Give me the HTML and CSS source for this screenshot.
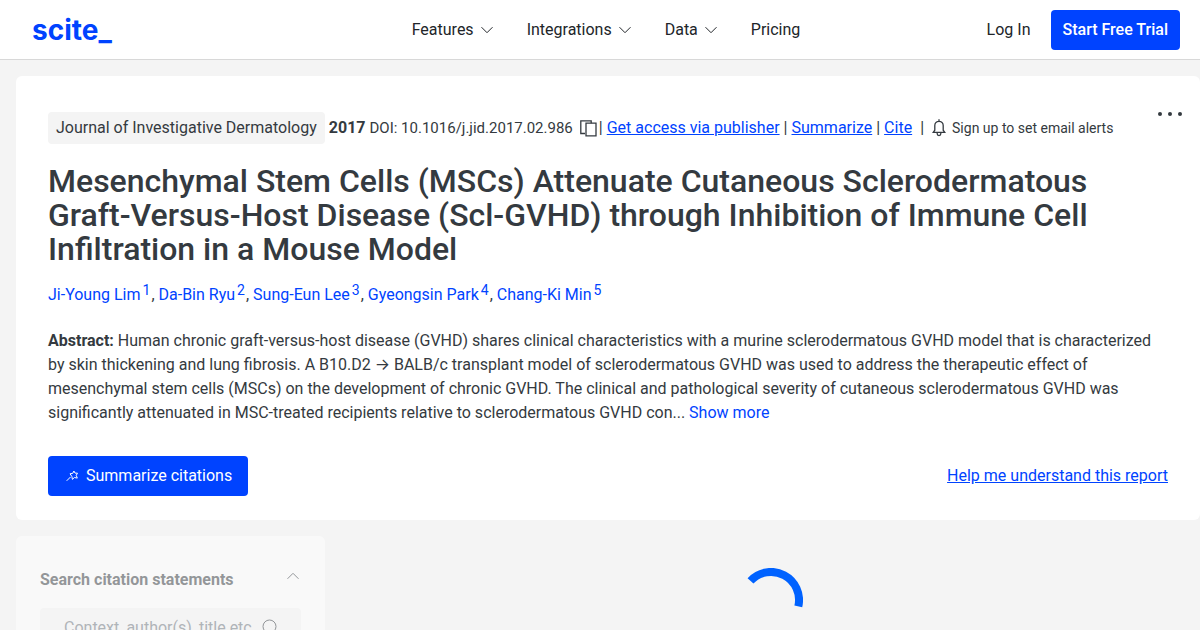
FILE: index.html
```html
<!DOCTYPE html>
<html lang="en">
<head>
<meta charset="utf-8">
<meta name="viewport" content="width=device-width, initial-scale=1">
<title>Mesenchymal Stem Cells (MSCs) Attenuate Cutaneous Sclerodermatous Graft-Versus-Host Disease - scite</title>
<link rel="stylesheet" href="styles.css">
</head>
<body>
<header class="header">
  <a class="logo" href="#">scite_</a>
  <nav class="nav">
    <button class="nav-item" type="button">Features
      <svg class="chevron" viewBox="0 0 12 8" aria-hidden="true"><path d="M.5 1.2 6 6.7l5.500-5.500"/></svg></button>
    <button class="nav-item" type="button">Integrations
      <svg class="chevron" viewBox="0 0 12 8" aria-hidden="true"><path d="M.5 1.2 6 6.7l5.500-5.500"/></svg></button>
    <button class="nav-item" type="button">Data
      <svg class="chevron" viewBox="0 0 12 8" aria-hidden="true"><path d="M.5 1.2 6 6.7l5.500-5.500"/></svg></button>
    <a class="nav-item" href="#">Pricing</a>
  </nav>
  <div class="account">
    <a class="login" href="#">Log In</a>
    <a class="trial" href="#">Start Free Trial</a>
  </div>
</header>

<main class="page">
  <article class="card">
    <div class="topline">
      <div class="meta">
        <span class="journal">Journal of Investigative Dermatology</span>
        <b>2017</b>
        <span class="doi">DOI: 10.1016/j.jid.2017.02.986</span>
        <span class="copy-group">
          <button class="icon-button" type="button" aria-label="Copy DOI">
            <svg class="copy" viewBox="0 0 17 17" aria-hidden="true"><path d="M5 13.500H.8V.8h10.400v2.400"/><path d="M6 3.200h10v12.600H6z"/></svg>
          </button>|
        </span>
        <a href="#">Get access via publisher</a>
        <span>|</span>
        <a href="#">Summarize</a>
        <span>|</span>
        <a href="#">Cite</a>
        <span class="divider">|</span>
        <button class="alerts" type="button">
          <svg class="bell" viewBox="0 0 14 18" aria-hidden="true"><path d="M7 .3v2M1.200 13.400h11.600l-1.600-2.200V6.500a4.200 4.200 0 0 0-8.400 0v4.700zM5.200 14v.8a1.800 1.800 0 0 0 3.600 0V14"/></svg>
          Sign up to set email alerts
        </button>
      </div>
      <button class="more" type="button" aria-label="More options">
        <svg class="dots" viewBox="0 0 24 4" aria-hidden="true"><circle cx="2" cy="2" r="2"/><circle cx="12" cy="2" r="2"/><circle cx="22" cy="2" r="2"/></svg>
      </button>
    </div>

    <h1 class="title">Mesenchymal Stem Cells (MSCs) Attenuate Cutaneous Sclerodermatous Graft-Versus-Host Disease (Scl-GVHD) through Inhibition of Immune Cell Infiltration in a Mouse Model</h1>

    <p class="authors"><a href="#">Ji-Young Lim<sup>1</sup></a>, <a href="#">Da-Bin Ryu<sup>2</sup></a>, <a href="#">Sung-Eun Lee<sup>3</sup></a>, <a href="#">Gyeongsin Park<sup>4</sup></a>, <a href="#">Chang-Ki Min<sup>5</sup></a></p>

    <p class="abstract"><b>Abstract:</b> Human chronic graft-versus-host disease (GVHD) shares clinical characteristics with a murine sclerodermatous GVHD model that is characterized by skin thickening and lung fibrosis. A B10.D2 → BALB/c transplant model of sclerodermatous GVHD was used to address the therapeutic effect of mesenchymal stem cells (MSCs) on the development of chronic GVHD. The clinical and pathological severity of cutaneous sclerodermatous GVHD was significantly attenuated in MSC-treated recipients relative to sclerodermatous GVHD con... <a href="#">Show more</a></p>

    <div class="actions">
      <button class="summarize" type="button">
        <svg class="wand" viewBox="0 0 12 12" aria-hidden="true"><path d="M.7 10.800 4.600 6.900M4 3.800l2.700-.4L7.900 1l1.100 2.100 2.500.1-1.300 2.200 1.100 2.700-2.900-.6-2 1.900-.5-2.900z"/></svg>
        Summarize citations
      </button>
      <a class="help" href="#">Help me understand this report</a>
    </div>
  </article>

  <div class="columns">
    <aside class="filters">
      <div class="filters-head">
        <label class="filters-title" for="search">Search citation statements</label>
        <button class="icon-button" type="button" aria-label="Collapse search">
          <svg class="chevron up" viewBox="0 0 12 8" aria-hidden="true"><path d="M.5 1.200 6 6.700l5.500-5.500"/></svg>
        </button>
      </div>
      <div class="search">
        <input class="search-input" id="search" type="text" placeholder="Context, author(s), title etc.">
        <svg class="glass" viewBox="0 0 18 18" aria-hidden="true"><circle cx="8.500" cy="7.500" r="6.500"/><path d="m4 12-3.500 4.500"/></svg>
      </div>
    </aside>
    <section class="results" aria-label="Loading citations">
      <svg class="spinner" viewBox="0 0 64 64" aria-hidden="true"><path d="M11.500 12.900A28 28 0 0 1 59.300 38.300"/></svg>
    </section>
  </div>
</main>
</body>
</html>
```
FILE: styles.css
```css
* {
  box-sizing: border-box;
}

body {
  margin: 0;
  background: #f4f4f4;
  color: #343a40;
  font: 16px/24px Roboto, Inter, "Liberation Sans", sans-serif;
}

/* The page scrolls without a visible bar. */
html {
  scrollbar-width: none;
}

a {
  color: #0043ff;
}

button {
  padding: 0;
  border: 0;
  background: none;
  color: inherit;
  font: inherit;
  cursor: pointer;
}

svg {
  flex: none;
  fill: none;
  stroke: currentColor;
}

b {
  font-weight: 700;
}

.header {
  display: grid;
  grid-template-columns: 1fr auto 1fr;
  align-items: center;
  height: 60px;
  padding: 1px 20px 0 32px;
  border-bottom: 1px solid #d8d8d8;
  background: #fff;
  color: #212529;
}

.header a {
  text-decoration: none;
}

.header .logo {
  justify-self: start;
  color: #0043ff;
  font: 700 28px/32px Inter, sans-serif;
}

.nav {
  display: flex;
  gap: 34px;
}

.nav-item {
  display: flex;
  align-items: center;
  gap: 7px;
  color: #212529;
}

.chevron {
  width: 12px;
  height: 8px;
}

.chevron.up {
  transform: rotate(180deg);
}

.account {
  display: flex;
  justify-content: flex-end;
  align-items: center;
  gap: 20px;
}

.header .login {
  color: #212529;
}

.header .trial {
  padding: 8px 12px;
  border-radius: 4px;
  background: #0043ff;
  color: #fff;
  font-weight: 500;
}

.page {
  padding: 16px 0 0 16px;
}

.card {
  padding: 36px 32px 24px;
  border-radius: 6px;
  background: #fff;
}

.topline {
  display: flex;
  justify-content: space-between;
  align-items: flex-start;
}

.meta {
  display: flex;
  flex-wrap: wrap;
  align-items: center;
  gap: 4px;
}

.journal {
  padding: 4px 8px;
  border-radius: 4px;
  background: #f4f4f4;
}

.doi {
  font-size: 15px;
}

.copy-group {
  display: flex;
  align-items: center;
  gap: 2px;
  margin-left: 3px;
}

.icon-button {
  display: flex;
}

.copy {
  width: 17px;
  height: 17px;
  stroke-width: 1.3;
}

.divider {
  margin: 0 4px;
}

.alerts {
  display: flex;
  align-items: center;
  gap: 6px;
  font-size: 14px;
}

.bell {
  width: 14px;
  height: 18px;
  stroke-width: 1.3;
}

.more {
  display: flex;
  margin-right: -14px;
}

.dots {
  width: 24px;
  height: 4px;
  fill: currentColor;
  stroke: none;
}

.title {
  margin: 20px 0 0;
  font-size: 32px;
  line-height: 34px;
  font-weight: 500;
}

.authors {
  margin: 17px 0 0;
}

.authors a,
.abstract a {
  text-decoration: none;
}

sup {
  padding: 0 1px 0 2px;
  font-size: 14px;
  line-height: 0;
  vertical-align: 5px;
}

.abstract {
  margin: 22px 0 0;
}

.actions {
  display: flex;
  justify-content: space-between;
  align-items: center;
  margin-top: 31px;
}

.summarize {
  display: flex;
  align-items: center;
  gap: 8px;
  padding: 8px 16px 8px 18px;
  border-radius: 4px;
  background: #0043ff;
  color: #fff;
}

.wand {
  width: 12px;
  height: 12px;
}

.columns {
  display: grid;
  grid-template-columns: 309px 1fr;
  gap: 16px;
  margin-top: 16px;
}

.filters {
  padding: 32px 24px;
  border-radius: 6px;
  background: #fff;
  opacity: 0.5;
}

.filters-head {
  display: flex;
  justify-content: space-between;
  align-items: flex-start;
}

.filters-head .icon-button {
  margin: 4px 2px 0 0;
}

.filters-title {
  font-weight: 700;
}

.search {
  display: flex;
  align-items: center;
  gap: 8px;
  margin-top: 16px;
  padding: 8px 22px 8px 24px;
  border-radius: 4px;
  background: #f4f4f4;
}

.search-input {
  flex: 1;
  min-width: 0;
  padding: 0;
  border: 0;
  outline: 0;
  background: none;
  color: inherit;
  font: inherit;
}

.search-input::placeholder {
  color: #6c757d;
}

.glass {
  width: 18px;
  height: 18px;
}

.results {
  display: flex;
  justify-content: center;
  padding: 32px 0;
}

.spinner {
  width: 64px;
  height: 64px;
  stroke: #0062ff;
  stroke-width: 8;
}
```
